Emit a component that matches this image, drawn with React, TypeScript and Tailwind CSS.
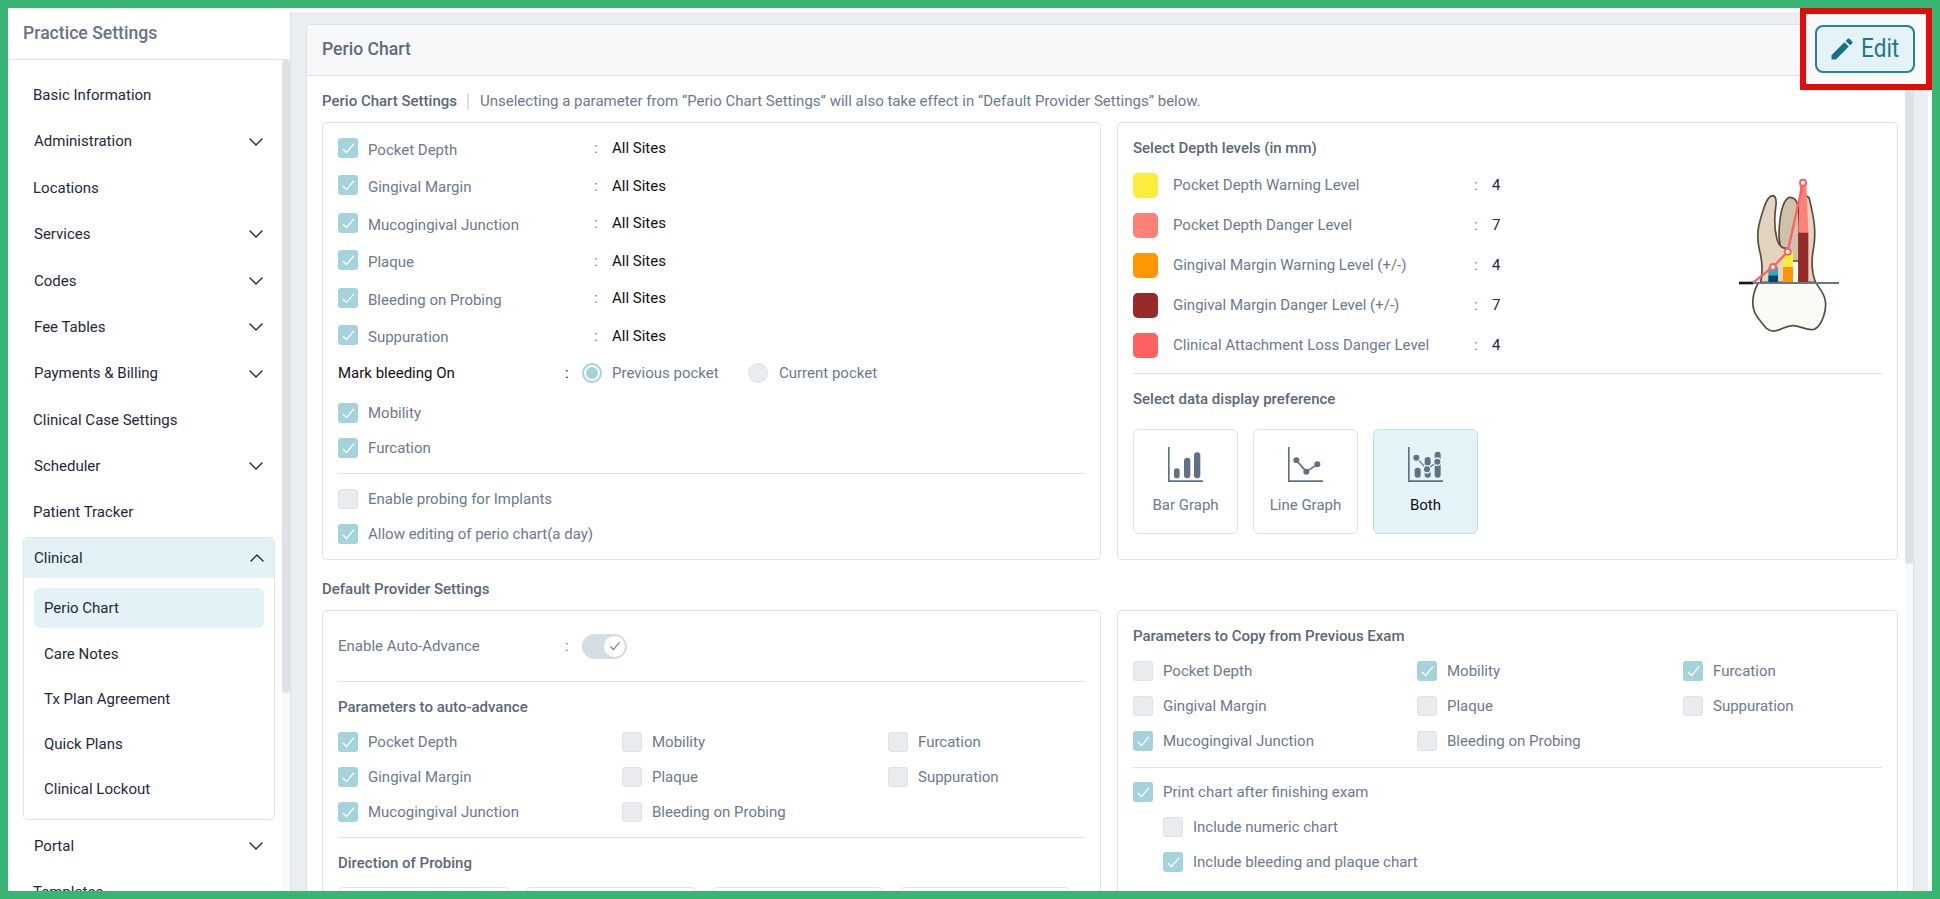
import React from "react";

const ChevronDown = () => (
  <svg width="14" height="8" viewBox="0 0 14 8" fill="none" stroke="#1e293b" strokeWidth="1.4" strokeLinecap="round" strokeLinejoin="round">
    <path d="M1 1l6 6 6-6" />
  </svg>
);
const ChevronUp = () => (
  <svg width="14" height="8" viewBox="0 0 14 8" fill="none" stroke="#1e293b" strokeWidth="1.4" strokeLinecap="round" strokeLinejoin="round">
    <path d="M1 7l6-6 6 6" />
  </svg>
);

const CheckBox = ({ on }: { on: boolean }) =>
  on ? (
    <span className="flex h-5 w-5 shrink-0 rounded-[3px] bg-[#a5d3dc]">
      <svg width="20" height="20" viewBox="0 0 20 20" fill="none" stroke="#fff" strokeWidth="1.3">
        <path d="M5 11l3.5 3.6L16 5.6" />
      </svg>
    </span>
  ) : (
    <span className="h-5 w-5 shrink-0 rounded-[3px] border border-[#dee2e6] bg-[#e9ecef]" />
  );

const Check = ({ label, on, shift }: { label: string; on: boolean; shift?: boolean }) => (
  <div className="flex h-[35px] items-center gap-[10px]">
    <CheckBox on={on} />
    <span className={shift ? "mt-[4px] text-[15px] text-[#6b7a8d]" : "text-[15px] text-[#6b7a8d]"}>{label}</span>
  </div>
);

const Divider = () => <div className="h-px bg-[#dee2e6]" />;

const navTop: [string, boolean][] = [
  ["Basic Information", false],
  ["Administration", true],
  ["Locations", false],
  ["Services", true],
  ["Codes", true],
  ["Fee Tables", true],
  ["Payments & Billing", true],
  ["Clinical Case Settings", false],
  ["Scheduler", true],
  ["Patient Tracker", false],
];

const NavItem = ({ label, chevron }: { label: string; chevron: boolean }) => (
  <div className="flex h-[46.4px] items-center justify-between pr-[12px] text-[15px] text-[#1e293b]">
    <span className={chevron ? "pl-[11px]" : "pl-[10px]"}>{label}</span>
    {chevron && <ChevronDown />}
  </div>
);

const Sidebar = () => (
  <aside className="flex w-[282px] shrink-0 flex-col bg-white">
    <div className="flex h-[52px] shrink-0 items-center border-b border-[#dee2e6] pb-[1px] pl-[15px] text-[17.6px] font-medium text-[#64748b]">
      Practice Settings
    </div>
    <div className="flex min-h-0 flex-1">
      <nav className="min-w-0 flex-1 overflow-hidden pl-[15px] pr-[7px] pt-[12px]">
        {navTop.map(([l, c]) => (
          <NavItem key={l} label={l} chevron={c} />
        ))}
        <div className="mt-[1px] rounded-[5px] border border-[#dee2e6] pb-[7px]">
          <div className="flex h-[40px] items-center justify-between rounded-t-[5px] bg-[#e3f2f6] pl-[10px] pr-[10px] text-[15px] text-[#1e293b]">
            <span>Clinical</span>
            <ChevronUp />
          </div>
          <div className="px-[10px] pt-[10px]">
            <div className="mb-[4px] flex h-[40px] items-center rounded-[6px] bg-[#e3f2f6] pl-[10px] text-[15px] text-[#1e293b]">Perio Chart</div>
            {["Care Notes", "Tx Plan Agreement", "Quick Plans", "Clinical Lockout"].map((t) => (
              <div key={t} className="flex h-[45px] items-center pl-[10px] text-[15px] text-[#1e293b]">{t}</div>
            ))}
          </div>
        </div>
        <div className="mt-[3px]">
          <NavItem label="Portal" chevron />
          <NavItem label="Templates" chevron={false} />
        </div>
      </nav>
      <div className="w-2 shrink-0 bg-[#f8f9fa]">
        <div className="h-[633px] rounded-t-[4px] rounded-b-[4px] bg-[#dee2e6]" />
      </div>
    </div>
  </aside>
);

const Tooth = () => (
  <svg width="170" height="180" viewBox="0 0 510 540" className="shrink-0" fill="none">
    <path d="M178 366C158 400 155 440 175 468C195 495 205 512 228 510C250 506 262 492 285 494C310 496 328 512 348 504C370 490 385 445 378 415C373 392 358 380 352 366Z" fill="#fbfbf6" stroke="#5a4a3c" strokeWidth="5" />
    <path d="M240 230C240 170 250 120 268 110C285 106 296 120 298 140L310 300L250 300Z" fill="#cfc1aa" stroke="#5a4a3c" strokeWidth="5" />
    <path d="M185 364C192 330 190 300 182 270C170 220 178 190 195 140C202 118 210 104 222 104C232 106 233 120 230 140C226 170 226 205 234 235C240 255 250 262 262 262L262 364Z" fill="#e2d4be" stroke="#5a4a3c" strokeWidth="5" />
    <path d="M312 100L330 110C345 170 352 210 344 260C336 300 338 335 350 364L300 364L300 150Z" fill="#e2d4be" stroke="#5a4a3c" strokeWidth="5" />
    <rect x="208" y="318" width="29" height="25" fill="#1cb0c9" />
    <rect x="208" y="343" width="29" height="21" fill="#03446e" />
    <rect x="252" y="272" width="30" height="46" fill="#ffeb3b" />
    <rect x="252" y="318" width="30" height="46" fill="#ff9800" />
    <path d="M298 215L303 65H322L328 215Z" fill="#ff8078" />
    <rect x="298" y="215" width="30" height="149" fill="#982a2a" />
    <path d="M120 366H162" stroke="#16181a" strokeWidth="8" />
    <path d="M162 366H420" stroke="#64788a" strokeWidth="6" />
    <path d="M162 365L222 318L266 272L312 65" stroke="#ff6060" strokeWidth="7" />
    <circle cx="222" cy="318" r="9" fill="#fff" stroke="#ff6060" strokeWidth="6" />
    <circle cx="266" cy="272" r="9" fill="#fff" stroke="#ff6060" strokeWidth="6" />
    <circle cx="312" cy="65" r="9" fill="#fff" stroke="#ff6060" strokeWidth="6" />
  </svg>
);

const axes = "M0 0H5V100H105V105H0Z";
const BarIcon = () => (
  <svg width="35" height="35" viewBox="0 0 105 105" fill="#5f7285">
    <path d={axes} />
    <rect x="18" y="64" width="17" height="30" rx="8" />
    <rect x="48" y="32" width="19" height="62" rx="9" />
    <rect x="78" y="16" width="19" height="78" rx="9" />
  </svg>
);
const LineIcon = () => (
  <svg width="35" height="35" viewBox="0 0 105 105" fill="#5f7285">
    <path d={axes} />
    <path d="M25 40L55 74L88 52" fill="none" stroke="#5f7285" strokeWidth="5" />
    <circle cx="25" cy="40" r="9" />
    <circle cx="55" cy="74" r="9" />
    <circle cx="88" cy="52" r="9" />
  </svg>
);
const BothIcon = () => (
  <svg width="35" height="35" viewBox="0 0 105 105" fill="#5f7285">
    <path d={axes} />
    <rect x="20" y="62" width="18" height="30" rx="8" />
    <rect x="50" y="30" width="18" height="62" rx="9" />
    <rect x="80" y="14" width="18" height="78" rx="9" />
    <path d="M25 32L57 67L88 44" fill="none" stroke="#e3f3f7" strokeWidth="11" />
    <path d="M25 32L57 67L88 44" fill="none" stroke="#5f7285" strokeWidth="4" />
    <circle cx="25" cy="32" r="11" stroke="#e3f3f7" strokeWidth="4" />
    <circle cx="57" cy="67" r="11" stroke="#e3f3f7" strokeWidth="4" />
    <circle cx="88" cy="44" r="11" stroke="#e3f3f7" strokeWidth="4" />
  </svg>
);

const GraphBtn = ({ label, active, children }: { label: string; active?: boolean; children: React.ReactNode }) => (
  <div
    className={
      active
        ? "flex h-[105px] w-[105px] flex-col items-center rounded-[6px] border border-[#bfe0e8] bg-[#e3f3f7] pt-[17px] text-[15px] text-[#111]"
        : "flex h-[105px] w-[105px] flex-col items-center rounded-[6px] border border-[#dee2e6] bg-white pt-[17px] text-[15px] text-[#6b7a8d]"
    }
  >
    {children}
    <span className="mt-[12px]">{label}</span>
  </div>
);

const sites = ["Pocket Depth", "Gingival Margin", "Mucogingival Junction", "Plaque", "Bleeding on Probing", "Suppuration"];
const depths: [string, string, string][] = [
  ["bg-[#ffeb3b]", "Pocket Depth Warning Level", "4"],
  ["bg-[#ff8078]", "Pocket Depth Danger Level", "7"],
  ["bg-[#ff9800]", "Gingival Margin Warning Level (+/-)", "4"],
  ["bg-[#982a2a]", "Gingival Margin Danger Level (+/-)", "7"],
  ["bg-[#ff6060]", "Clinical Attachment Loss Danger Level", "4"],
];

const heading = "text-[15px] font-medium leading-[20px] text-[#5a6878]";

const SettingsLeft = () => (
  <div className="rounded-[5px] border border-[#dee2e6] px-[15px] pb-[7px] pt-[6px]">
    {sites.map((s) => (
      <div key={s} className="flex h-[37.5px] items-center">
        <div className="w-[256px]">
          <Check label={s} on shift />
        </div>
        <span className="mt-[1px] w-[18px] text-[15px] text-[#6b7a8d]">:</span>
        <span className="mt-[1px] text-[15px] text-[#111]">All Sites</span>
      </div>
    ))}
    <div className="flex h-[37.5px] items-center">
      <span className="w-[227px] text-[15px] text-[#111]">Mark bleeding On</span>
      <span className="w-[17px] text-[15px] text-[#111]">:</span>
      <span className="flex h-5 w-5 items-center justify-center rounded-full border-2 border-[#a5d3dc] bg-white">
        <span className="h-[12px] w-[12px] rounded-full bg-[#a5d3dc]" />
      </span>
      <span className="ml-[10px] w-[136px] text-[15px] text-[#6b7a8d]">Previous pocket</span>
      <span className="h-5 w-5 rounded-full border border-[#dee2e6] bg-[#e9ecef]" />
      <span className="ml-[11px] text-[15px] text-[#6b7a8d]">Current pocket</span>
    </div>
    <div className="mt-[4px]">
      <Check label="Mobility" on />
      <Check label="Furcation" on />
    </div>
    <div className="mb-[8px] mt-[7px]">
      <Divider />
    </div>
    <Check label="Enable probing for Implants" on={false} />
    <Check label="Allow editing of perio chart(a day)" on />
  </div>
);

const SettingsRight = () => (
  <div className="rounded-[5px] border border-[#dee2e6] px-[15px] pb-[24px]">
    <div className="flex justify-between">
      <div>
        <div className={"pt-[15px] " + heading}>Select Depth levels (in mm)</div>
        <div className="mt-[7px] pb-[1px]">
          {depths.map(([c, l, v]) => (
            <div key={l} className="flex h-[40px] items-center">
              <span className={"h-[25px] w-[25px] rounded-[5px] " + c} />
              <span className="ml-[15px] w-[301px] text-[15px] text-[#6b7a8d]">{l}</span>
              <span className="w-[18px] text-[15px] text-[#6b7a8d]">:</span>
              <span className="text-[15px] text-[#1e293b]">{v}</span>
            </div>
          ))}
        </div>
      </div>
      <div className="mr-[13px] mt-[38px]">
        <Tooth />
      </div>
    </div>
    <div className="mt-[7px]">
      <Divider />
    </div>
    <div className={"mt-[15px] " + heading}>Select data display preference</div>
    <div className="mt-[20px] flex gap-[15px]">
      <GraphBtn label="Bar Graph"><BarIcon /></GraphBtn>
      <GraphBtn label="Line Graph"><LineIcon /></GraphBtn>
      <GraphBtn label="Both" active><BothIcon /></GraphBtn>
    </div>
  </div>
);

const ParamGrid = ({ items }: { items: [string, boolean][] }) => (
  <div className="grid grid-cols-[284px_266px_1fr]">
    {items.map(([l, on]) => (
      <Check key={l} label={l} on={on} />
    ))}
  </div>
);

const ProviderLeft = () => (
  <div className="rounded-t-[5px] border border-[#dee2e6] px-[15px] pb-[40px] pt-[18px]">
    <div className="flex h-[35px] items-center">
      <span className="w-[227px] text-[15px] text-[#6b7a8d]">Enable Auto-Advance</span>
      <span className="w-[17px] text-[15px] text-[#6b7a8d]">:</span>
      <span className="flex h-[25px] w-[45px] items-center justify-end rounded-full bg-[#d5dce4] pr-[2px]">
        <span className="flex h-[21px] w-[21px] items-center justify-center rounded-full bg-white">
          <svg width="14" height="14" viewBox="0 0 14 14" fill="none" stroke="#6b7a8d" strokeWidth="1.1">
            <path d="M2.5 7.5l3 3.2L11.5 3" />
          </svg>
        </span>
      </span>
    </div>
    <div className="mt-[17px]"><Divider /></div>
    <div className={"mt-[15px] " + heading}>Parameters to auto-advance</div>
    <div className="mt-[8px]">
      <ParamGrid
        items={[
          ["Pocket Depth", true],
          ["Mobility", false],
          ["Furcation", false],
          ["Gingival Margin", true],
          ["Plaque", false],
          ["Suppuration", false],
          ["Mucogingival Junction", true],
          ["Bleeding on Probing", false],
        ]}
      />
    </div>
    <div className="mt-[7px]"><Divider /></div>
    <div className={"mt-[15px] " + heading}>Direction of Probing</div>
    <div className="mt-[14px] flex gap-[15px]">
      {[0, 1, 2, 3].map((i) => (
        <div key={i} className="h-[60px] w-[172px] rounded-[6px] border border-[#dee2e6]" />
      ))}
    </div>
  </div>
);

const ProviderRight = () => (
  <div className="rounded-t-[5px] border border-[#dee2e6] px-[15px] pb-[40px] pt-[15px]">
    <div className={heading}>Parameters to Copy from Previous Exam</div>
    <div className="mt-[8px]">
      <ParamGrid
        items={[
          ["Pocket Depth", false],
          ["Mobility", true],
          ["Furcation", true],
          ["Gingival Margin", false],
          ["Plaque", false],
          ["Suppuration", false],
          ["Mucogingival Junction", true],
          ["Bleeding on Probing", false],
        ]}
      />
    </div>
    <div className="mb-[7px] mt-[8px]"><Divider /></div>
    <Check label="Print chart after finishing exam" on />
    <div className="pl-[30px]">
      <Check label="Include numeric chart" on={false} />
      <Check label="Include bleeding and plaque chart" on />
    </div>
  </div>
);

const Panel = () => (
  <section className="ml-[15px] mr-[14px] mt-[12px] flex min-h-0 flex-1 flex-col overflow-hidden rounded-t-[5px] border-x border-t border-[#dee2e6] bg-white">
    <div className="flex h-[51px] shrink-0 items-center border-b border-[#dee2e6] bg-[#f7f8fa] pb-[2px] pl-[15px] text-[17.6px] font-medium text-[#5f6c7b]">
      Perio Chart
    </div>
    <div className="flex min-h-0 flex-1">
      <div className="min-w-0 flex-1 overflow-hidden pl-[15px] pr-[7px]">
        <div className="flex h-[46px] items-center pt-[5px] text-[15px] text-[#6b7a8d]">
          <span className="font-medium text-[#5a6878]">Perio Chart Settings</span>
          <span className="ml-[10px] mr-[11px] h-[17px] w-[2px] bg-[#dee2e6]" />
          <span>Unselecting a parameter from “Perio Chart Settings” will also take effect in “Default Provider Settings” below.</span>
        </div>
        <div className="grid grid-cols-[779px_781px] gap-x-[16px]">
          <SettingsLeft />
          <SettingsRight />
        </div>
        <div className="flex h-[50px] items-center pt-[10px] text-[15px] font-medium text-[#5a6878]">Default Provider Settings</div>
        <div className="grid grid-cols-[779px_781px] gap-x-[16px]">
          <ProviderLeft />
          <ProviderRight />
        </div>
      </div>
      <div className="w-2 shrink-0 bg-[#f8f9fa]">
        <div className="h-[488px] rounded-b-[4px] bg-[#dee2e6]" />
      </div>
    </div>
  </section>
);

export default function App() {
  return (
    <div className="relative flex h-screen w-full overflow-hidden border-8 border-[#38b572] bg-white font-['Roboto',sans-serif]">
      <Sidebar />
      <main className="mr-[4px] mt-[4px] flex min-w-0 flex-1 flex-col border-l border-[#dee2e6] bg-[#ebeef1]">
        <Panel />
      </main>
      <div className="absolute right-0 top-0 flex h-[82px] w-[132px] items-center border-[6px] border-[#e60a0a] bg-[#f7f8fa] pl-[9px]">
        <button className="flex h-[48px] w-[100px] items-center justify-center gap-[3px] rounded-[8px] border-2 border-[#2b7f92] bg-[#e3f3f7] text-[25px] text-[#1a7a8e]">
          <svg width="28" height="28" viewBox="0 0 24 24" fill="#14708a">
            <path d="M3 17.25V21h3.75L17.81 9.94l-3.75-3.75L3 17.25zM20.71 7.04a1 1 0 0 0 0-1.41l-2.34-2.34a1 1 0 0 0-1.41 0l-1.83 1.83 3.75 3.75 1.83-1.83z" />
          </svg>
          <span className="scale-x-90">Edit</span>
        </button>
      </div>
    </div>
  );
}
